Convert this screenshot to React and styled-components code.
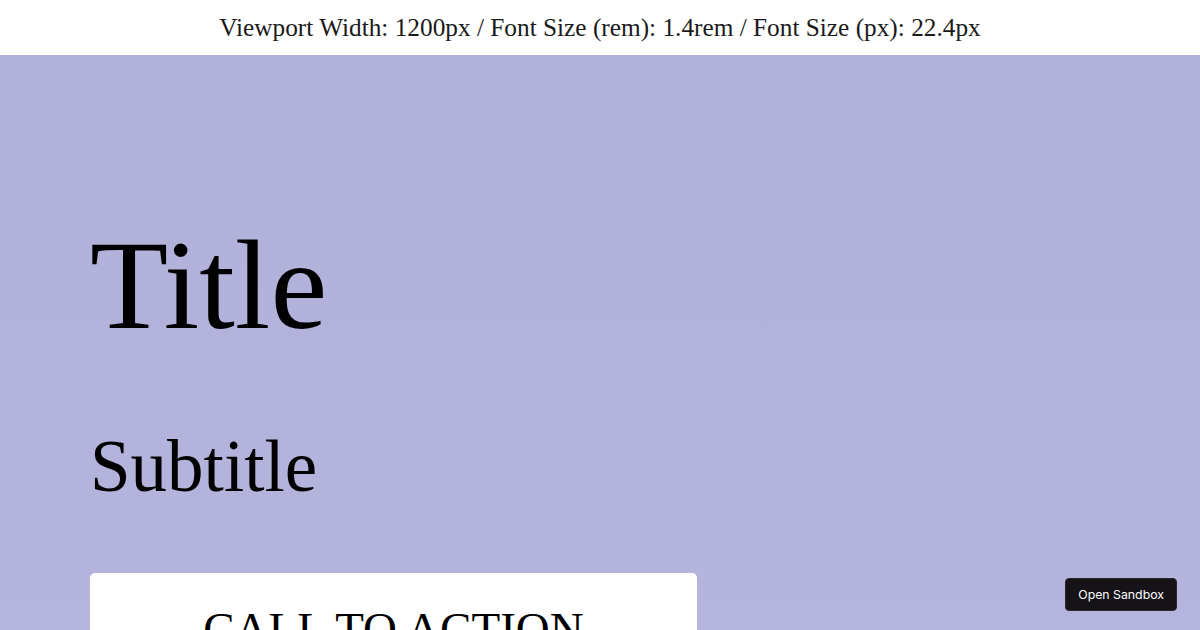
import React from "react";
import styled, { createGlobalStyle } from "styled-components";

const Global = createGlobalStyle`
  html, body { margin: 0; padding: 0; }
  body {
    background: #b2b1da;
    font-family: "Liberation Serif", "DejaVu Serif", serif;
    color: #000;
    overflow: hidden;
  }
`;

const Page = styled.div`
  height: 630px;
  overflow: hidden;
  display: flex;
  flex-direction: column;
  background: linear-gradient(#b1b0d9, #b5b4dc);
`;

const Header = styled.header`
  flex: none;
  height: 55px;
  background: #fff;
  display: flex;
  align-items: center;
  justify-content: center;
  font-size: 25.3px;
  color: #1a1a1a;
`;

const Main = styled.main`
  display: flex;
  flex-direction: column;
  align-items: flex-start;
  padding: 166px 90px 0;
`;

const Title = styled.h1`
  margin: 0;
  font-weight: 400;
  font-size: 128px;
  line-height: 1;
`;

const Subtitle = styled.h2`
  margin: 81px 0 0;
  font-weight: 400;
  font-size: 73px;
  line-height: 1;
`;

const Cta = styled.button`
  flex: none;
  margin-top: 70px;
  width: 607px;
  padding: 33px 0 20px;
  border: none;
  border-radius: 5px;
  background: #fff;
  font-family: inherit;
  font-size: 47px;
  line-height: 1;
  color: #000;
  text-align: center;
  cursor: pointer;
`;

const Sandbox = styled.a`
  position: fixed;
  right: 23px;
  bottom: 19px;
  box-sizing: border-box;
  height: 33px;
  padding: 0 12px;
  display: flex;
  align-items: center;
  background: #151317;
  border: 1px solid #2a282c;
  border-radius: 4px;
  color: #fff;
  font-family: Inter, "Liberation Sans", sans-serif;
  font-size: 12.3px;
  text-decoration: none;
`;

export default function App() {
  return (
    <Page>
      <Global />
      <Header>
        Viewport Width: 1200px / Font Size (rem): 1.4rem / Font Size (px): 22.4px
      </Header>
      <Main>
        <Title>Title</Title>
        <Subtitle>Subtitle</Subtitle>
        <Cta>CALL TO ACTION</Cta>
      </Main>
      <Sandbox href="#">Open Sandbox</Sandbox>
    </Page>
  );
}
